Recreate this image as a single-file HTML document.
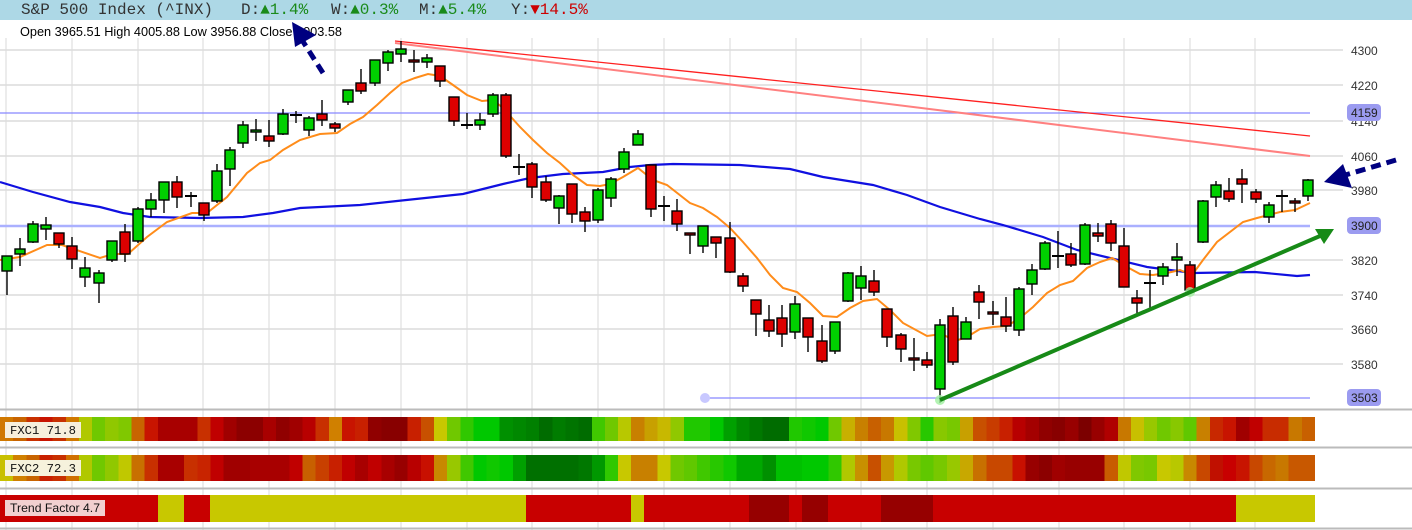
<!DOCTYPE html>
<html><head><meta charset="utf-8"><style>
html,body{margin:0;padding:0;width:1412px;height:530px;overflow:hidden;background:#fff}
#hdr{position:absolute;left:0;top:0;width:1412px;height:20px;background:#add8e6;font:16px "Liberation Mono",monospace;color:#333;line-height:20px}
#hdr span{position:absolute;top:0;white-space:pre}
.g{color:#1a8a1a}.r{color:#cc0000}
svg{position:absolute;left:0;top:0}
</style></head><body>
<svg width="1412" height="530" xmlns="http://www.w3.org/2000/svg" font-family="Liberation Sans, sans-serif">
<g stroke="#e6e6e6" stroke-width="1.5">
<line x1="6" y1="38" x2="6" y2="530"/><line x1="72" y1="38" x2="72" y2="530"/><line x1="138" y1="38" x2="138" y2="530"/><line x1="203" y1="38" x2="203" y2="530"/><line x1="269" y1="38" x2="269" y2="530"/><line x1="335" y1="38" x2="335" y2="530"/><line x1="401" y1="38" x2="401" y2="530"/><line x1="467" y1="38" x2="467" y2="530"/><line x1="532" y1="38" x2="532" y2="530"/><line x1="598" y1="38" x2="598" y2="530"/><line x1="664" y1="38" x2="664" y2="530"/><line x1="730" y1="38" x2="730" y2="530"/><line x1="796" y1="38" x2="796" y2="530"/><line x1="861" y1="38" x2="861" y2="530"/><line x1="927" y1="38" x2="927" y2="530"/><line x1="993" y1="38" x2="993" y2="530"/><line x1="1059" y1="38" x2="1059" y2="530"/><line x1="1124" y1="38" x2="1124" y2="530"/><line x1="1190" y1="38" x2="1190" y2="530"/><line x1="1255" y1="38" x2="1255" y2="530"/>
</g>
<g stroke="#dcdcdc" stroke-width="1.5">
<line x1="0" y1="50" x2="1343" y2="50"/><line x1="0" y1="85" x2="1343" y2="85"/><line x1="0" y1="121" x2="1343" y2="121"/><line x1="0" y1="156" x2="1343" y2="156"/><line x1="0" y1="190" x2="1343" y2="190"/><line x1="0" y1="260" x2="1343" y2="260"/><line x1="0" y1="295" x2="1343" y2="295"/><line x1="0" y1="329" x2="1343" y2="329"/><line x1="0" y1="364" x2="1343" y2="364"/>
</g>
<line x1="0" y1="113" x2="1310" y2="113" stroke="#8888ff" stroke-width="1.2"/>
<line x1="0" y1="226" x2="1310" y2="226" stroke="#aab0ff" stroke-width="2.5"/>
<line x1="705" y1="398" x2="1310" y2="398" stroke="#8888ff" stroke-width="1.2"/>
<circle cx="705" cy="398" r="5" fill="#c8c8ff"/>
<line x1="395" y1="41" x2="1310" y2="136" stroke="#ff2020" stroke-width="1.3"/>
<line x1="395" y1="43" x2="1310" y2="156" stroke="#ff8080" stroke-width="2"/>
<line x1="0" y1="409.5" x2="1412" y2="409.5" stroke="#bbb" stroke-width="2"/>
<polyline fill="none" stroke="#1010e0" stroke-width="2.2" points="0,182 33,192 70,202 100,207 123,213 150,217 200,218 243,217 273,213 300,208 340,206 360,205 397,201 463,194 483,189 503,184 530,178 563,174 603,172 630,167 650,165 673,164 740,165 790,169 823,177 873,185 907,195 940,207 980,219 1003,225 1043,237 1077,250 1110,258 1147,267 1193,273 1255,272 1297,276 1310,275"/>
<polyline fill="none" stroke="#ff8c1a" stroke-width="2" points="0,260 20,257 47,245 62,245 100,258 113,254 128,254 147,237 167,222 192,213 207,213 227,197 247,173 260,163 270,160 283,150 300,140 320,134 337,133 350,124 363,117 377,105 390,93 402,83 415,78 428,74 440,76 453,85 467,95 482,101 493,100 503,108 520,127 533,140 547,153 560,163 573,175 587,185 600,186 610,184 623,177 638,168 653,180 667,185 690,203 703,208 717,217 730,228 743,242 757,258 770,275 783,288 797,292 810,303 823,316 837,317 850,308 863,301 877,299 890,310 903,323 927,336 942,334 955,341 967,337 980,329 993,327 1007,326 1020,318 1033,307 1047,293 1060,285 1073,281 1087,268 1100,262 1112,258 1127,267 1140,274 1153,275 1167,273 1180,270 1192,275 1203,260 1217,242 1243,222 1257,218 1280,212 1295,210 1310,203"/>
<g stroke="#000" stroke-width="1.4">
<line x1="7" y1="256" x2="7" y2="295"/><rect x="2" y="256" width="10" height="15" fill="#00d000"/>
<line x1="20" y1="238" x2="20" y2="266"/><rect x="15" y="249" width="10" height="5" fill="#00d000"/>
<line x1="33" y1="221" x2="33" y2="243"/><rect x="28" y="224" width="10" height="18" fill="#00d000"/>
<line x1="46" y1="217" x2="46" y2="240"/><rect x="41" y="225" width="10" height="4" fill="#00d000"/>
<line x1="59" y1="233" x2="59" y2="248"/><rect x="54" y="233" width="10" height="11" fill="#dd0000"/>
<line x1="72" y1="237" x2="72" y2="269"/><rect x="67" y="246" width="10" height="13" fill="#dd0000"/>
<line x1="85" y1="257" x2="85" y2="287"/><rect x="80" y="268" width="10" height="9" fill="#00d000"/>
<line x1="99" y1="270" x2="99" y2="303"/><rect x="94" y="273" width="10" height="10" fill="#00d000"/>
<line x1="112" y1="241" x2="112" y2="262"/><rect x="107" y="241" width="10" height="19" fill="#00d000"/>
<line x1="125" y1="224" x2="125" y2="262"/><rect x="120" y="232" width="10" height="22" fill="#dd0000"/>
<line x1="138" y1="207" x2="138" y2="243"/><rect x="133" y="209" width="10" height="32" fill="#00d000"/>
<line x1="151" y1="193" x2="151" y2="217"/><rect x="146" y="200" width="10" height="9" fill="#00d000"/>
<line x1="164" y1="182" x2="164" y2="213"/><rect x="159" y="182" width="10" height="18" fill="#00d000"/>
<line x1="177" y1="176" x2="177" y2="208"/><rect x="172" y="182" width="10" height="15" fill="#dd0000"/>
<line x1="191" y1="192" x2="191" y2="207"/><line x1="185" y1="196" x2="197" y2="196" stroke-width="2"/>
<line x1="204" y1="203" x2="204" y2="221"/><rect x="199" y="203" width="10" height="12" fill="#dd0000"/>
<line x1="217" y1="164" x2="217" y2="203"/><rect x="212" y="171" width="10" height="30" fill="#00d000"/>
<line x1="230" y1="147" x2="230" y2="186"/><rect x="225" y="150" width="10" height="19" fill="#00d000"/>
<line x1="243" y1="121" x2="243" y2="148"/><rect x="238" y="125" width="10" height="18" fill="#00d000"/>
<line x1="256" y1="119" x2="256" y2="141"/><rect x="251" y="130" width="10" height="2" fill="#00d000"/>
<line x1="269" y1="120" x2="269" y2="147"/><rect x="264" y="136" width="10" height="5" fill="#dd0000"/>
<line x1="283" y1="109" x2="283" y2="135"/><rect x="278" y="114" width="10" height="20" fill="#00d000"/>
<line x1="296" y1="111" x2="296" y2="123"/><line x1="290" y1="115" x2="302" y2="115" stroke-width="2"/>
<line x1="309" y1="116" x2="309" y2="136"/><rect x="304" y="118" width="10" height="12" fill="#00d000"/>
<line x1="322" y1="100" x2="322" y2="126"/><rect x="317" y="114" width="10" height="6" fill="#dd0000"/>
<line x1="335" y1="122" x2="335" y2="132"/><rect x="330" y="124" width="10" height="4" fill="#dd0000"/>
<line x1="348" y1="90" x2="348" y2="105"/><rect x="343" y="90" width="10" height="12" fill="#00d000"/>
<line x1="361" y1="69" x2="361" y2="94"/><rect x="356" y="83" width="10" height="8" fill="#dd0000"/>
<line x1="375" y1="60" x2="375" y2="86"/><rect x="370" y="60" width="10" height="23" fill="#00d000"/>
<line x1="388" y1="50" x2="388" y2="71"/><rect x="383" y="52" width="10" height="11" fill="#00d000"/>
<line x1="401" y1="41" x2="401" y2="62"/><rect x="396" y="49" width="10" height="5" fill="#00d000"/>
<line x1="414" y1="50" x2="414" y2="72"/><rect x="409" y="60" width="10" height="2" fill="#dd0000"/>
<line x1="427" y1="54" x2="427" y2="68"/><rect x="422" y="58" width="10" height="4" fill="#00d000"/>
<line x1="440" y1="66" x2="440" y2="87"/><rect x="435" y="66" width="10" height="15" fill="#dd0000"/>
<line x1="454" y1="97" x2="454" y2="126"/><rect x="449" y="97" width="10" height="24" fill="#dd0000"/>
<line x1="467" y1="113" x2="467" y2="129"/><line x1="461" y1="125" x2="473" y2="125" stroke-width="2"/>
<line x1="480" y1="113" x2="480" y2="130"/><rect x="475" y="120" width="10" height="5" fill="#00d000"/>
<line x1="493" y1="93" x2="493" y2="117"/><rect x="488" y="95" width="10" height="19" fill="#00d000"/>
<line x1="506" y1="93" x2="506" y2="158"/><rect x="501" y="95" width="10" height="61" fill="#dd0000"/>
<line x1="519" y1="154" x2="519" y2="175"/><line x1="513" y1="167" x2="525" y2="167" stroke-width="2"/>
<line x1="532" y1="162" x2="532" y2="198"/><rect x="527" y="164" width="10" height="23" fill="#dd0000"/>
<line x1="546" y1="176" x2="546" y2="202"/><rect x="541" y="182" width="10" height="18" fill="#dd0000"/>
<line x1="559" y1="195" x2="559" y2="224"/><rect x="554" y="196" width="10" height="12" fill="#00d000"/>
<line x1="572" y1="184" x2="572" y2="223"/><rect x="567" y="184" width="10" height="30" fill="#dd0000"/>
<line x1="585" y1="207" x2="585" y2="232"/><rect x="580" y="212" width="10" height="9" fill="#dd0000"/>
<line x1="598" y1="188" x2="598" y2="223"/><rect x="593" y="190" width="10" height="30" fill="#00d000"/>
<line x1="611" y1="177" x2="611" y2="207"/><rect x="606" y="179" width="10" height="19" fill="#00d000"/>
<line x1="624" y1="148" x2="624" y2="173"/><rect x="619" y="152" width="10" height="17" fill="#00d000"/>
<line x1="638" y1="130" x2="638" y2="145"/><rect x="633" y="134" width="10" height="11" fill="#00d000"/>
<line x1="651" y1="165" x2="651" y2="217"/><rect x="646" y="165" width="10" height="44" fill="#dd0000"/>
<line x1="664" y1="196" x2="664" y2="221"/><line x1="658" y1="206" x2="670" y2="206" stroke-width="2"/>
<line x1="677" y1="199" x2="677" y2="231"/><rect x="672" y="211" width="10" height="13" fill="#dd0000"/>
<line x1="690" y1="233" x2="690" y2="254"/><rect x="685" y="233" width="10" height="2" fill="#dd0000"/>
<line x1="703" y1="226" x2="703" y2="253"/><rect x="698" y="226" width="10" height="20" fill="#00d000"/>
<line x1="716" y1="237" x2="716" y2="258"/><rect x="711" y="237" width="10" height="6" fill="#dd0000"/>
<line x1="730" y1="222" x2="730" y2="273"/><rect x="725" y="238" width="10" height="34" fill="#dd0000"/>
<line x1="743" y1="273" x2="743" y2="292"/><rect x="738" y="276" width="10" height="10" fill="#dd0000"/>
<line x1="756" y1="300" x2="756" y2="336"/><rect x="751" y="300" width="10" height="14" fill="#dd0000"/>
<line x1="769" y1="305" x2="769" y2="337"/><rect x="764" y="320" width="10" height="11" fill="#dd0000"/>
<line x1="782" y1="305" x2="782" y2="347"/><rect x="777" y="318" width="10" height="16" fill="#dd0000"/>
<line x1="795" y1="296" x2="795" y2="339"/><rect x="790" y="304" width="10" height="28" fill="#00d000"/>
<line x1="808" y1="318" x2="808" y2="352"/><rect x="803" y="318" width="10" height="19" fill="#dd0000"/>
<line x1="822" y1="325" x2="822" y2="363"/><rect x="817" y="341" width="10" height="20" fill="#dd0000"/>
<line x1="835" y1="322" x2="835" y2="354"/><rect x="830" y="322" width="10" height="29" fill="#00d000"/>
<line x1="848" y1="272" x2="848" y2="302"/><rect x="843" y="273" width="10" height="28" fill="#00d000"/>
<line x1="861" y1="266" x2="861" y2="300"/><rect x="856" y="276" width="10" height="12" fill="#00d000"/>
<line x1="874" y1="270" x2="874" y2="296"/><rect x="869" y="281" width="10" height="11" fill="#dd0000"/>
<line x1="887" y1="309" x2="887" y2="347"/><rect x="882" y="309" width="10" height="28" fill="#dd0000"/>
<line x1="901" y1="333" x2="901" y2="362"/><rect x="896" y="335" width="10" height="14" fill="#dd0000"/>
<line x1="914" y1="338" x2="914" y2="371"/><rect x="909" y="358" width="10" height="2" fill="#dd0000"/>
<line x1="927" y1="352" x2="927" y2="368"/><rect x="922" y="360" width="10" height="5" fill="#dd0000"/>
<line x1="940" y1="319" x2="940" y2="403"/><rect x="935" y="325" width="10" height="64" fill="#00d000"/>
<line x1="953" y1="307" x2="953" y2="365"/><rect x="948" y="316" width="10" height="46" fill="#dd0000"/>
<line x1="966" y1="317" x2="966" y2="339"/><rect x="961" y="322" width="10" height="17" fill="#00d000"/>
<line x1="979" y1="285" x2="979" y2="319"/><rect x="974" y="292" width="10" height="10" fill="#dd0000"/>
<line x1="993" y1="301" x2="993" y2="325"/><rect x="988" y="312" width="10" height="2" fill="#dd0000"/>
<line x1="1006" y1="297" x2="1006" y2="332"/><rect x="1001" y="317" width="10" height="9" fill="#dd0000"/>
<line x1="1019" y1="287" x2="1019" y2="336"/><rect x="1014" y="289" width="10" height="41" fill="#00d000"/>
<line x1="1032" y1="264" x2="1032" y2="295"/><rect x="1027" y="270" width="10" height="14" fill="#00d000"/>
<line x1="1045" y1="241" x2="1045" y2="270"/><rect x="1040" y="243" width="10" height="26" fill="#00d000"/>
<line x1="1058" y1="231" x2="1058" y2="268"/><line x1="1052" y1="256" x2="1064" y2="256" stroke-width="2"/>
<line x1="1071" y1="243" x2="1071" y2="267"/><rect x="1066" y="254" width="10" height="11" fill="#dd0000"/>
<line x1="1085" y1="223" x2="1085" y2="265"/><rect x="1080" y="225" width="10" height="39" fill="#00d000"/>
<line x1="1098" y1="223" x2="1098" y2="242"/><rect x="1093" y="233" width="10" height="3" fill="#dd0000"/>
<line x1="1111" y1="220" x2="1111" y2="251"/><rect x="1106" y="224" width="10" height="19" fill="#dd0000"/>
<line x1="1124" y1="228" x2="1124" y2="287"/><rect x="1119" y="246" width="10" height="41" fill="#dd0000"/>
<line x1="1137" y1="290" x2="1137" y2="313"/><rect x="1132" y="298" width="10" height="5" fill="#dd0000"/>
<line x1="1150" y1="270" x2="1150" y2="308"/><line x1="1144" y1="283" x2="1156" y2="283" stroke-width="2"/>
<line x1="1163" y1="263" x2="1163" y2="285"/><rect x="1158" y="267" width="10" height="9" fill="#00d000"/>
<line x1="1177" y1="243" x2="1177" y2="276"/><rect x="1172" y="257" width="10" height="3" fill="#00d000"/>
<line x1="1190" y1="261" x2="1190" y2="290"/><rect x="1185" y="265" width="10" height="25" fill="#dd0000"/>
<line x1="1203" y1="200" x2="1203" y2="243"/><rect x="1198" y="201" width="10" height="41" fill="#00d000"/>
<line x1="1216" y1="181" x2="1216" y2="207"/><rect x="1211" y="185" width="10" height="12" fill="#00d000"/>
<line x1="1229" y1="178" x2="1229" y2="202"/><rect x="1224" y="191" width="10" height="8" fill="#dd0000"/>
<line x1="1242" y1="169" x2="1242" y2="203"/><rect x="1237" y="179" width="10" height="5" fill="#dd0000"/>
<line x1="1256" y1="189" x2="1256" y2="203"/><rect x="1251" y="192" width="10" height="7" fill="#dd0000"/>
<line x1="1269" y1="202" x2="1269" y2="223"/><rect x="1264" y="205" width="10" height="12" fill="#00d000"/>
<line x1="1282" y1="190" x2="1282" y2="212"/><line x1="1276" y1="196" x2="1288" y2="196" stroke-width="2"/>
<line x1="1295" y1="198" x2="1295" y2="212"/><rect x="1290" y="201" width="10" height="2" fill="#dd0000"/>
<line x1="1308" y1="179" x2="1308" y2="201"/><rect x="1303" y="180" width="10" height="16" fill="#00d000"/>
</g>
<circle cx="940" cy="400" r="5" fill="#a0f0a0" opacity="0.8"/>
<circle cx="1190" cy="292" r="5" fill="#a0f0a0" opacity="0.8"/>
<line x1="940" y1="400" x2="1320" y2="236" stroke="#178a17" stroke-width="4"/>
<polygon points="1334,229 1315,229 1324,244" fill="#178a17"/>
<line x1="323" y1="73" x2="302" y2="40" stroke="#000080" stroke-width="5" stroke-dasharray="10,6"/>
<line x1="1396" y1="160" x2="1342" y2="176" stroke="#000080" stroke-width="5" stroke-dasharray="10,6"/>
<polygon points="1324,182 1343,164 1352,188" fill="#000080"/>
<g font-size="12" fill="#333">
<text x="1351" y="55">4300</text><text x="1351" y="90">4220</text><text x="1351" y="126">4140</text><text x="1351" y="161">4060</text><text x="1351" y="195">3980</text><text x="1351" y="265">3820</text><text x="1351" y="300">3740</text><text x="1351" y="334">3660</text><text x="1351" y="369">3580</text>
</g>
<g font-size="12" fill="#222">
<rect x="1347" y="104" width="34" height="17" rx="4" fill="#9b9bf0"/><text x="1351" y="117">4159</text>
<rect x="1347" y="217" width="34" height="17" rx="4" fill="#9b9bf0"/><text x="1351" y="230">3900</text>
<rect x="1347" y="389" width="34" height="17" rx="4" fill="#9b9bf0"/><text x="1351" y="402">3503</text>
</g>
<text x="20" y="36" font-size="13" fill="#000" textLength="322" lengthAdjust="spacingAndGlyphs">Open 3965.51  High 4005.88  Low 3956.88  Close 4003.58</text>
<polygon points="292,22 295,47 316,35" fill="#000080"/>
<g stroke="#bbb" stroke-width="2"><line x1="0" y1="447.5" x2="1412" y2="447.5"/><line x1="0" y1="488.5" x2="1412" y2="488.5"/><line x1="0" y1="528.5" x2="1412" y2="528.5"/></g>
<g transform="translate(0,417) scale(13.15,24)" shape-rendering="crispEdges">
<rect x="0" width="1.05" height="1" fill="#d07800"/><rect x="1" width="1.05" height="1" fill="#c86400"/><rect x="2" width="1.05" height="1" fill="#c83000"/><rect x="3" width="1.05" height="1" fill="#c81400"/><rect x="4" width="1.05" height="1" fill="#c83000"/><rect x="5" width="1.05" height="1" fill="#d07800"/><rect x="6" width="1.05" height="1" fill="#b0c800"/><rect x="7" width="1.05" height="1" fill="#70c800"/><rect x="8" width="1.05" height="1" fill="#90c800"/><rect x="9" width="1.05" height="1" fill="#80c800"/><rect x="10" width="1.05" height="1" fill="#c86400"/><rect x="11" width="1.05" height="1" fill="#c81400"/><rect x="12" width="3.05" height="1" fill="#a80000"/><rect x="15" width="1.05" height="1" fill="#c83000"/><rect x="16" width="1.05" height="1" fill="#c00000"/><rect x="17" width="1.05" height="1" fill="#a00000"/><rect x="18" width="2.05" height="1" fill="#8c0000"/><rect x="20" width="1.05" height="1" fill="#a80000"/><rect x="21" width="1.05" height="1" fill="#900000"/><rect x="22" width="1.05" height="1" fill="#a00000"/><rect x="23" width="1.05" height="1" fill="#b80000"/><rect x="24" width="1.05" height="1" fill="#c83000"/><rect x="25" width="1.05" height="1" fill="#d08000"/><rect x="26" width="1.05" height="1" fill="#c81400"/><rect x="27" width="1.05" height="1" fill="#c82000"/><rect x="28" width="1.05" height="1" fill="#900000"/><rect x="29" width="2.05" height="1" fill="#880000"/><rect x="31" width="1.05" height="1" fill="#c82000"/><rect x="32" width="1.05" height="1" fill="#c85000"/><rect x="33" width="1.05" height="1" fill="#c8c800"/><rect x="34" width="1.05" height="1" fill="#70c800"/><rect x="35" width="1.05" height="1" fill="#30c800"/><rect x="36" width="2.05" height="1" fill="#00c800"/><rect x="38" width="1.05" height="1" fill="#009000"/><rect x="39" width="1.05" height="1" fill="#008800"/><rect x="40" width="1.05" height="1" fill="#008000"/><rect x="41" width="1.05" height="1" fill="#006c00"/><rect x="42" width="1.05" height="1" fill="#007c00"/><rect x="43" width="1.05" height="1" fill="#007400"/><rect x="44" width="1.05" height="1" fill="#006c00"/><rect x="45" width="1.05" height="1" fill="#40c800"/><rect x="46" width="1.05" height="1" fill="#70c800"/><rect x="47" width="1.05" height="1" fill="#b8c800"/><rect x="48" width="1.05" height="1" fill="#c88000"/><rect x="49" width="1.05" height="1" fill="#c8a000"/><rect x="50" width="1.05" height="1" fill="#c8b800"/><rect x="51" width="1.05" height="1" fill="#90c800"/><rect x="52" width="2.05" height="1" fill="#20c800"/><rect x="54" width="1.05" height="1" fill="#00c800"/><rect x="55" width="1.05" height="1" fill="#00a000"/><rect x="56" width="1.05" height="1" fill="#008800"/><rect x="57" width="1.05" height="1" fill="#007800"/><rect x="58" width="2.05" height="1" fill="#006c00"/><rect x="60" width="1.05" height="1" fill="#20c800"/><rect x="61" width="1.05" height="1" fill="#10c800"/><rect x="62" width="1.05" height="1" fill="#00c800"/><rect x="63" width="1.05" height="1" fill="#70c800"/><rect x="64" width="1.05" height="1" fill="#c8b000"/><rect x="65" width="1.05" height="1" fill="#c88000"/><rect x="66" width="1.05" height="1" fill="#c86000"/><rect x="67" width="1.05" height="1" fill="#c87800"/><rect x="68" width="1.05" height="1" fill="#c8c000"/><rect x="69" width="1.05" height="1" fill="#80c800"/><rect x="70" width="1.05" height="1" fill="#28c800"/><rect x="71" width="1.05" height="1" fill="#88c800"/><rect x="72" width="1.05" height="1" fill="#78c800"/><rect x="73" width="1.05" height="1" fill="#c8a000"/><rect x="74" width="1.05" height="1" fill="#c85000"/><rect x="75" width="1.05" height="1" fill="#c83c00"/><rect x="76" width="1.05" height="1" fill="#c82000"/><rect x="77" width="1.05" height="1" fill="#b80000"/><rect x="78" width="1.05" height="1" fill="#a40000"/><rect x="79" width="1.05" height="1" fill="#900000"/><rect x="80" width="1.05" height="1" fill="#880000"/><rect x="81" width="1.05" height="1" fill="#980000"/><rect x="82" width="1.05" height="1" fill="#7c0000"/><rect x="83" width="1.05" height="1" fill="#980000"/><rect x="84" width="1.05" height="1" fill="#b00000"/><rect x="85" width="1.05" height="1" fill="#c87800"/><rect x="86" width="1.05" height="1" fill="#c8c000"/><rect x="87" width="1.05" height="1" fill="#98c800"/><rect x="88" width="1.05" height="1" fill="#70c800"/><rect x="89" width="1.05" height="1" fill="#88c800"/><rect x="90" width="1.05" height="1" fill="#60c800"/><rect x="91" width="1.05" height="1" fill="#c88000"/><rect x="92" width="1.05" height="1" fill="#c82800"/><rect x="93" width="1.05" height="1" fill="#c81400"/><rect x="94" width="1.05" height="1" fill="#a00000"/><rect x="95" width="1.05" height="1" fill="#c00000"/><rect x="96" width="2.05" height="1" fill="#c82c00"/><rect x="98" width="1.05" height="1" fill="#c87800"/><rect x="99" width="1" height="1" fill="#c86000"/>
</g>
<g transform="translate(0,455) scale(13.15,26)" shape-rendering="crispEdges">
<rect x="0" width="1.05" height="1" fill="#c8c000"/><rect x="1" width="1.05" height="1" fill="#d08000"/><rect x="2" width="1.05" height="1" fill="#c86400"/><rect x="3" width="1.05" height="1" fill="#c82000"/><rect x="4" width="1.05" height="1" fill="#c83000"/><rect x="5" width="1.05" height="1" fill="#d07000"/><rect x="6" width="1.05" height="1" fill="#b0c800"/><rect x="7" width="1.05" height="1" fill="#70c800"/><rect x="8" width="1.05" height="1" fill="#90c800"/><rect x="9" width="1.05" height="1" fill="#c0c800"/><rect x="10" width="1.05" height="1" fill="#c87000"/><rect x="11" width="1.05" height="1" fill="#c83000"/><rect x="12" width="2.05" height="1" fill="#a80000"/><rect x="14" width="1.05" height="1" fill="#c83000"/><rect x="15" width="1.05" height="1" fill="#c82400"/><rect x="16" width="1.05" height="1" fill="#c00000"/><rect x="17" width="2.05" height="1" fill="#a00000"/><rect x="19" width="3.05" height="1" fill="#a80000"/><rect x="22" width="1.05" height="1" fill="#c00000"/><rect x="23" width="1.05" height="1" fill="#c86000"/><rect x="24" width="1.05" height="1" fill="#c84000"/><rect x="25" width="1.05" height="1" fill="#c82000"/><rect x="26" width="1.05" height="1" fill="#c00000"/><rect x="27" width="1.05" height="1" fill="#a80000"/><rect x="28" width="1.05" height="1" fill="#c00000"/><rect x="29" width="1.05" height="1" fill="#a80000"/><rect x="30" width="1.05" height="1" fill="#980000"/><rect x="31" width="1.05" height="1" fill="#b80000"/><rect x="32" width="1.05" height="1" fill="#c81000"/><rect x="33" width="1.05" height="1" fill="#c88800"/><rect x="34" width="1.05" height="1" fill="#98c800"/><rect x="35" width="1.05" height="1" fill="#40c800"/><rect x="36" width="1.05" height="1" fill="#00c800"/><rect x="37" width="1.05" height="1" fill="#10c800"/><rect x="38" width="1.05" height="1" fill="#00c800"/><rect x="39" width="1.05" height="1" fill="#00a000"/><rect x="40" width="4.05" height="1" fill="#007000"/><rect x="44" width="1.05" height="1" fill="#007800"/><rect x="45" width="1.05" height="1" fill="#009800"/><rect x="46" width="1.05" height="1" fill="#30c800"/><rect x="47" width="1.05" height="1" fill="#c8c800"/><rect x="48" width="2.05" height="1" fill="#c88000"/><rect x="50" width="1.05" height="1" fill="#c8c800"/><rect x="51" width="1.05" height="1" fill="#70c800"/><rect x="52" width="1.05" height="1" fill="#60c800"/><rect x="53" width="1.05" height="1" fill="#40c800"/><rect x="54" width="1.05" height="1" fill="#28c800"/><rect x="55" width="1.05" height="1" fill="#10c800"/><rect x="56" width="2.05" height="1" fill="#00a800"/><rect x="58" width="1.05" height="1" fill="#009000"/><rect x="59" width="2.05" height="1" fill="#00c000"/><rect x="61" width="2.05" height="1" fill="#00c800"/><rect x="63" width="1.05" height="1" fill="#30c800"/><rect x="64" width="1.05" height="1" fill="#b0c800"/><rect x="65" width="1.05" height="1" fill="#c89000"/><rect x="66" width="1.05" height="1" fill="#c85000"/><rect x="67" width="1.05" height="1" fill="#c89800"/><rect x="68" width="1.05" height="1" fill="#b0c800"/><rect x="69" width="1.05" height="1" fill="#78c800"/><rect x="70" width="1.05" height="1" fill="#60c800"/><rect x="71" width="1.05" height="1" fill="#78c800"/><rect x="72" width="1.05" height="1" fill="#98c800"/><rect x="73" width="1.05" height="1" fill="#c8a800"/><rect x="74" width="1.05" height="1" fill="#c87000"/><rect x="75" width="2.05" height="1" fill="#c84800"/><rect x="77" width="1.05" height="1" fill="#c81000"/><rect x="78" width="1.05" height="1" fill="#980000"/><rect x="79" width="1.05" height="1" fill="#8c0000"/><rect x="80" width="1.05" height="1" fill="#a00000"/><rect x="81" width="3.05" height="1" fill="#980000"/><rect x="84" width="1.05" height="1" fill="#c85c00"/><rect x="85" width="1.05" height="1" fill="#c0c800"/><rect x="86" width="1.05" height="1" fill="#80c800"/><rect x="87" width="1.05" height="1" fill="#78c800"/><rect x="88" width="1.05" height="1" fill="#c8c800"/><rect x="89" width="1.05" height="1" fill="#b8c800"/><rect x="90" width="1.05" height="1" fill="#c88800"/><rect x="91" width="1.05" height="1" fill="#c84800"/><rect x="92" width="1.05" height="1" fill="#c01000"/><rect x="93" width="1.05" height="1" fill="#c80000"/><rect x="94" width="1.05" height="1" fill="#c81400"/><rect x="95" width="1.05" height="1" fill="#c84800"/><rect x="96" width="1.05" height="1" fill="#c86800"/><rect x="97" width="1.05" height="1" fill="#c87800"/><rect x="98" width="2" height="1" fill="#c85800"/>
</g>
<g shape-rendering="crispEdges">
<rect x="0" y="495" width="158" height="27" fill="#c80000"/><rect x="158" y="495" width="26" height="27" fill="#c8c800"/><rect x="184" y="495" width="26" height="27" fill="#c80000"/><rect x="210" y="495" width="316" height="27" fill="#c8c800"/><rect x="526" y="495" width="105" height="27" fill="#c80000"/><rect x="631" y="495" width="13" height="27" fill="#c8c800"/><rect x="644" y="495" width="105" height="27" fill="#c80000"/><rect x="749" y="495" width="40" height="27" fill="#960000"/><rect x="789" y="495" width="13" height="27" fill="#c80000"/><rect x="802" y="495" width="26" height="27" fill="#960000"/><rect x="828" y="495" width="53" height="27" fill="#c80000"/><rect x="881" y="495" width="52" height="27" fill="#960000"/><rect x="933" y="495" width="303" height="27" fill="#c80000"/><rect x="1236" y="495" width="79" height="27" fill="#c8c800"/>
</g>
<rect x="5" y="422" width="76" height="16" fill="#f6efdc"/>
<text x="10" y="434" font-family="Liberation Mono, monospace" font-size="12" fill="#111" textLength="66" lengthAdjust="spacingAndGlyphs">FXC1 71.8</text>
<rect x="5" y="460" width="76" height="16" fill="#f6f2dc"/>
<text x="10" y="472" font-family="Liberation Mono, monospace" font-size="12" fill="#111" textLength="66" lengthAdjust="spacingAndGlyphs">FXC2 72.3</text>
<rect x="5" y="500" width="100" height="16" fill="#f2d0d0"/>
<text x="10" y="512" font-size="12" fill="#111" textLength="90" lengthAdjust="spacingAndGlyphs">Trend Factor 4.7</text>
</svg>
<div id="hdr"><span style="left:21px">S&amp;P 500 Index (^INX)</span><span style="left:241px">D:<span class="g" style="position:static">▲1.4%</span></span><span style="left:331px">W:<span class="g" style="position:static">▲0.3%</span></span><span style="left:419px">M:<span class="g" style="position:static">▲5.4%</span></span><span style="left:511px">Y:<span class="r" style="position:static">▼14.5%</span></span></div>
</body></html>
